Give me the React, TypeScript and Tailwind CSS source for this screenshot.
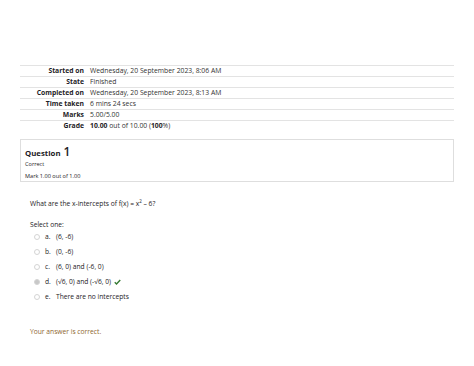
import React from "react";

const rows: { label: string; value: React.ReactNode }[] = [
  { label: "Started on", value: "Wednesday, 20 September 2023, 8:06 AM" },
  { label: "State", value: "Finished" },
  { label: "Completed on", value: "Wednesday, 20 September 2023, 8:13 AM" },
  { label: "Time taken", value: "6 mins 24 secs" },
  { label: "Marks", value: "5.00/5.00" },
  {
    label: "Grade",
    value: (
      <>
        <b className="font-bold text-[#1d2125]">10.00</b> out of 10.00 (<b className="font-bold text-[#1d2125]">100</b>%)
      </>
    ),
  },
];

const options = [
  { key: "a.", text: "(6, -6)" },
  { key: "b.", text: "(0, -6)" },
  { key: "c.", text: "(6, 0) and (-6, 0)" },
  { key: "d.", text: "(√6, 0) and (-√6, 0)", checked: true },
  { key: "e.", text: "There are no intercepts" },
];

function Radio({ checked }: { checked?: boolean }) {
  return (
    <span
      className={
        "inline-block w-[6px] h-[6px] rounded-full border border-[#d4d4d4] " +
        (checked ? "bg-[#c8c8c8]" : "bg-white")
      }
    />
  );
}

export default function App() {
  return (
    <div
      className="w-[474px] h-[366px] bg-white text-[#1d2125] overflow-hidden"
      style={{ fontFamily: '"Open Sans", "Noto Sans", sans-serif' }}
    >
      <div className="pt-[65px] px-[20px]">
        <table className="w-full border-collapse text-[6.8px] leading-[10.1px]">
          <tbody>
            {rows.map((r) => (
              <tr key={r.label} className="border-t border-[#e3e3e3]">
                <th className="w-[70px] text-right font-bold pr-[6px] py-0">{r.label}</th>
                <td className="text-[#333]">{r.value}</td>
              </tr>
            ))}
          </tbody>
        </table>

        <div className="mt-[7px] border border-[#dedede] px-[4px] pt-[5px] h-[43px]">
          <div className="flex items-baseline font-bold leading-[13px]">
            <span className="text-[7.8px]">Question</span>
            <span className="text-[12px] ml-[3px] font-semibold">1</span>
          </div>
          <div className="text-[5.6px] leading-[9px]">Correct</div>
          <div className="text-[5.6px] leading-[9px] mt-[3px]">Mark 1.00 out of 1.00</div>
        </div>

        <div className="px-[10px] pt-[17px] text-[6.7px]">
          <div className="leading-[10px]">
            What are the x-intercepts of f(x) = x<sup className="text-[4.5px]">2</sup> – 6?
          </div>
          <div className="mt-[11px] leading-[10px]">Select one:</div>
          <div className="pl-[4px] flex flex-col">
            {options.map((o) => (
              <div key={o.key} className="flex items-center h-[15px]">
                <Radio checked={o.checked} />
                <span className="ml-[5px] w-[11px]">{o.key}</span>
                <span>{o.text}</span>
                {o.checked && (
                  <svg className="ml-[3px]" width="7" height="6" viewBox="0 0 14 12">
                    <path d="M1.5 6.5 L5 10 L12.5 2" fill="none" stroke="#357a32" strokeWidth="2.8" />
                  </svg>
                )}
              </div>
            ))}
          </div>
          <div className="mt-[22px] text-[#8e662e] leading-[10px]">Your answer is correct.</div>
        </div>
      </div>
    </div>
  );
}
